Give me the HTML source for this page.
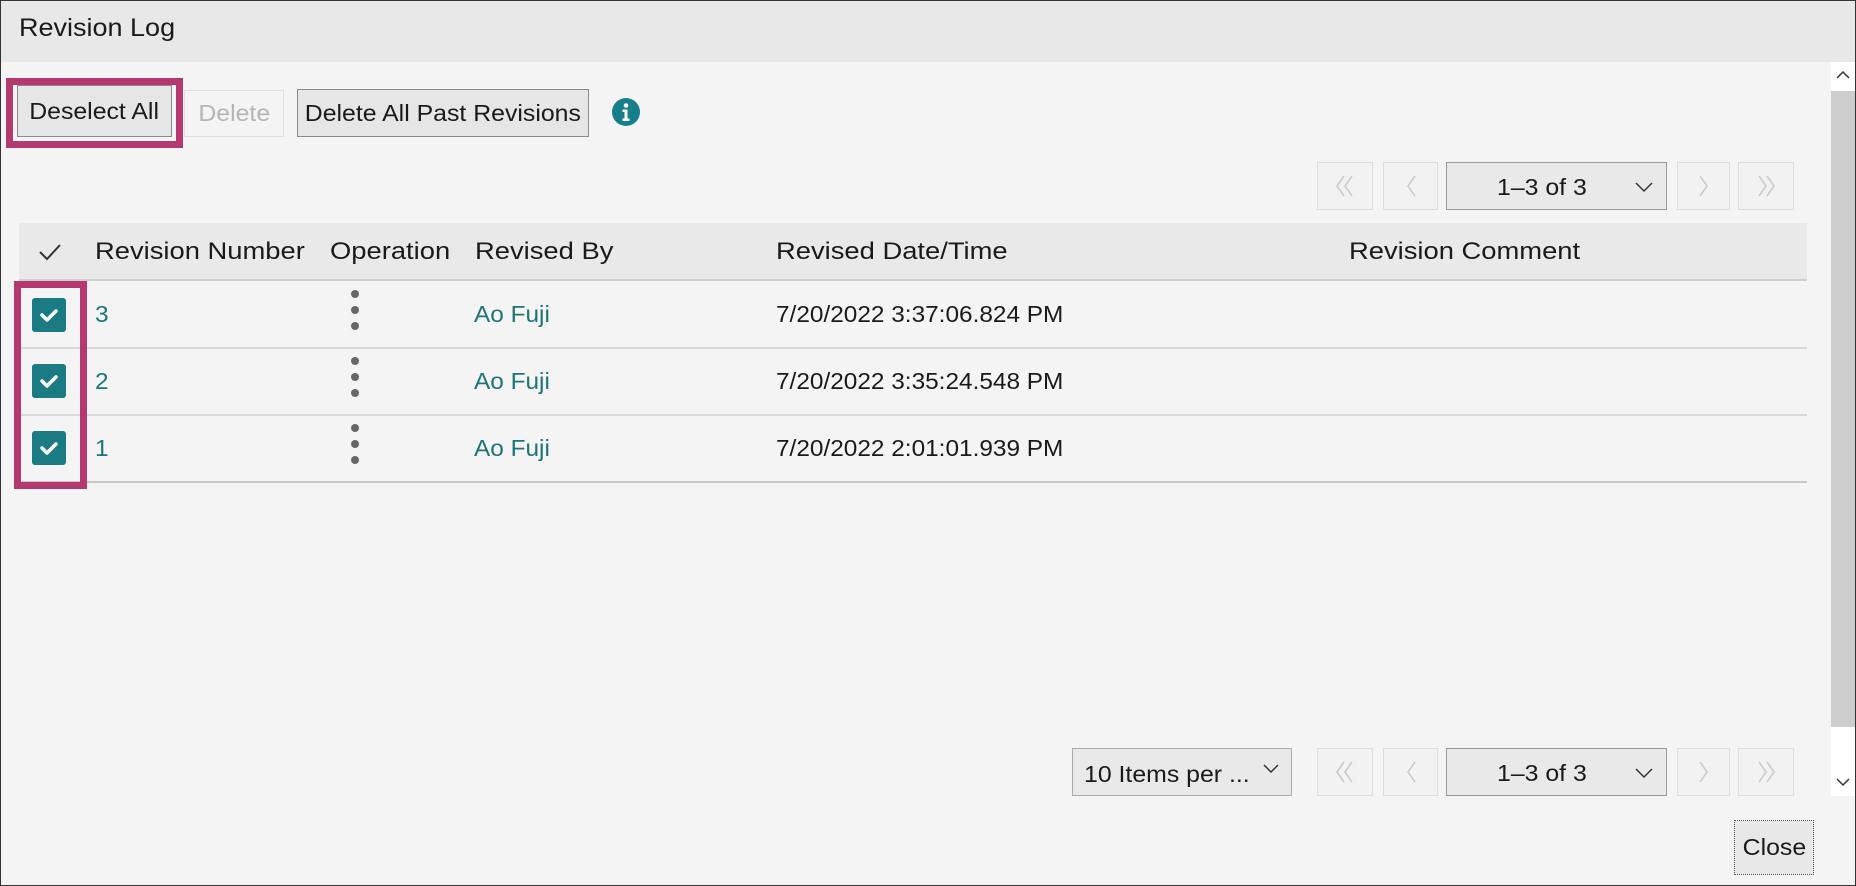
<!DOCTYPE html>
<html><head><meta charset="utf-8"><style>
*{box-sizing:border-box;margin:0;padding:0}
body{width:1856px;height:886px;background:#f4f4f4;font-family:"Liberation Sans",Arial,sans-serif;color:#1a1a1a;position:relative;overflow:hidden}
.abs{position:absolute}
.s{display:inline-block;transform:scaleX(1.08);transform-origin:left center;white-space:nowrap}
.c{transform-origin:center}
.frame{left:0;top:0;width:1856px;height:886px;border:1px solid #333}
.title{left:1px;top:1px;width:1854px;height:61px;background:#e8e8e8;font-size:25px;padding:13px 0 0 18px}
.btn{border:1px solid #8a8a8a;background:#e6e6e6;font-size:23px;display:flex;align-items:center;justify-content:center}
.pg{border:1px solid #ddd;background:#f2f2f2;display:flex;align-items:center;justify-content:center}
.dd{border:1px solid #999;background:#e9e9e9;font-size:23px}
.th{font-size:24px;top:238px}
.th .s{transform:scaleX(1.14)}
.row{left:19px;width:1788px;height:2px;background:#d8d8d8}
.cell{font-size:23px}
.cell .s{transform:scaleX(1.06)}
.link{color:#1d7575}
.cb{left:32px;width:34px;height:34px;background:#1a7b82;border-radius:3px}
.dot{width:8px;height:8px;border-radius:50%;background:#666;left:351px}
</style></head><body>
<div class="abs title"><span class="s">Revision Log</span></div>

<div class="abs" style="left:6px;top:78px;width:177px;height:70px;border:7px solid #b23a6e"></div>
<div class="abs btn" style="left:17px;top:85px;width:155px;height:52px"><span class="s c">Deselect All</span></div>
<div class="abs btn" style="left:184px;top:90px;width:100px;height:47px;border-color:#e0e0e0;background:#f4f4f4;color:#b5b5b5"><span class="s c">Delete</span></div>
<div class="abs btn" style="left:297px;top:89px;width:292px;height:48px"><span class="s c">Delete All Past Revisions</span></div>
<svg class="abs" style="left:612px;top:98px" width="28" height="28" viewBox="0 0 28 28"><circle cx="14" cy="14" r="14" fill="#16808a"/><circle cx="14" cy="7.5" r="2.3" fill="#fff"/><path d="M10.5 11.5h5v9h2v2.5h-7v-2.5h2v-6.5h-2z" fill="#fff"/></svg>

<!-- top pager -->
<div class="abs pg" style="left:1317px;top:162px;width:56px;height:48px"><svg width="24" height="24"><path d="M11 2L4 12l7 10M19 2l-7 10 7 10" fill="none" stroke="#c8c8c8" stroke-width="1.5"/></svg></div>
<div class="abs pg" style="left:1383px;top:162px;width:55px;height:48px"><svg width="14" height="24"><path d="M11 2L4 12l7 10" fill="none" stroke="#c8c8c8" stroke-width="1.5"/></svg></div>
<div class="abs dd" style="left:1446px;top:162px;width:221px;height:48px"><span class="abs s" style="left:50px;top:11px">1–3 of 3</span><svg class="abs" style="left:188px;top:18px" width="18" height="12"><path d="M1 2l8 8 8-8" fill="none" stroke="#333" stroke-width="1.5"/></svg></div>
<div class="abs pg" style="left:1677px;top:162px;width:53px;height:48px"><svg width="14" height="24"><path d="M3 2l7 10-7 10" fill="none" stroke="#c8c8c8" stroke-width="1.5"/></svg></div>
<div class="abs pg" style="left:1738px;top:162px;width:56px;height:48px"><svg width="24" height="24"><path d="M5 2l7 10-7 10M13 2l7 10-7 10" fill="none" stroke="#c8c8c8" stroke-width="1.5"/></svg></div>

<!-- table -->
<div class="abs" style="left:19px;top:223px;width:1788px;height:56px;background:#e9e9e9"></div>
<div class="abs row" style="top:279px;height:2px;background:#cfcfcf"></div>
<svg class="abs" style="left:38px;top:243px" width="24" height="18"><path d="M2 9l7 7L22 2" fill="none" stroke="#333" stroke-width="2"/></svg>
<div class="abs th" style="left:95px"><span class="s">Revision Number</span></div>
<div class="abs th" style="left:330px"><span class="s">Operation</span></div>
<div class="abs th" style="left:475px"><span class="s">Revised By</span></div>
<div class="abs th" style="left:776px"><span class="s">Revised Date/Time</span></div>
<div class="abs th" style="left:1349px"><span class="s">Revision Comment</span></div>

<div class="abs row" style="top:347px"></div>
<div class="abs row" style="top:414px"></div>
<div class="abs row" style="top:481px;background:#c8c8c8"></div>

<div class="abs" style="left:14px;top:281px;width:73px;height:208px;border:7px solid #b23a6e"></div>

<div class="abs cb" style="top:298px"></div>
<div class="abs cb" style="top:364px"></div>
<div class="abs cb" style="top:431px"></div>
<svg class="abs" style="left:32px;top:298px" width="34" height="170"><g fill="none" stroke="#fff" stroke-width="3.5" stroke-linecap="round" stroke-linejoin="round"><path d="M10 17l5 5 9-9"/><path d="M10 83l5 5 9-9"/><path d="M10 150l5 5 9-9"/></g></svg>

<div class="abs cell link" style="left:95px;top:301px"><span class="s">3</span></div>
<div class="abs cell link" style="left:95px;top:368px"><span class="s">2</span></div>
<div class="abs cell link" style="left:95px;top:435px"><span class="s">1</span></div>
<div class="abs dot" style="top:290px"></div><div class="abs dot" style="top:306px"></div><div class="abs dot" style="top:322px"></div>
<div class="abs dot" style="top:357px"></div><div class="abs dot" style="top:373px"></div><div class="abs dot" style="top:389px"></div>
<div class="abs dot" style="top:424px"></div><div class="abs dot" style="top:440px"></div><div class="abs dot" style="top:456px"></div>
<div class="abs cell link" style="left:474px;top:301px"><span class="s">Ao Fuji</span></div>
<div class="abs cell link" style="left:474px;top:368px"><span class="s">Ao Fuji</span></div>
<div class="abs cell link" style="left:474px;top:435px"><span class="s">Ao Fuji</span></div>
<div class="abs cell" style="left:776px;top:301px"><span class="s">7/20/2022 3:37:06.824 PM</span></div>
<div class="abs cell" style="left:776px;top:368px"><span class="s">7/20/2022 3:35:24.548 PM</span></div>
<div class="abs cell" style="left:776px;top:435px"><span class="s">7/20/2022 2:01:01.939 PM</span></div>

<!-- scrollbar -->
<div class="abs" style="left:1831px;top:62px;width:24px;height:734px;background:#fff"></div>
<div class="abs" style="left:1831px;top:91px;width:24px;height:636px;background:#cdcdcd"></div>
<svg class="abs" style="left:1836px;top:70px" width="14" height="9"><path d="M1 8l6-6 6 6" fill="none" stroke="#333" stroke-width="1.5"/></svg>
<svg class="abs" style="left:1836px;top:778px" width="14" height="9"><path d="M1 1l6 6 6-6" fill="none" stroke="#333" stroke-width="1.5"/></svg>

<!-- bottom -->
<div class="abs dd" style="left:1072px;top:748px;width:220px;height:48px;border-color:#aaa"><span class="abs s" style="left:11px;top:12px">10 Items per ...</span><svg class="abs" style="left:190px;top:15px" width="16" height="10"><path d="M1 1l7 7 7-7" fill="none" stroke="#333" stroke-width="1.5"/></svg></div>
<div class="abs pg" style="left:1317px;top:748px;width:56px;height:48px"><svg width="24" height="24"><path d="M11 2L4 12l7 10M19 2l-7 10 7 10" fill="none" stroke="#c8c8c8" stroke-width="1.5"/></svg></div>
<div class="abs pg" style="left:1383px;top:748px;width:55px;height:48px"><svg width="14" height="24"><path d="M11 2L4 12l7 10" fill="none" stroke="#c8c8c8" stroke-width="1.5"/></svg></div>
<div class="abs dd" style="left:1446px;top:748px;width:221px;height:48px"><span class="abs s" style="left:50px;top:11px">1–3 of 3</span><svg class="abs" style="left:188px;top:18px" width="18" height="12"><path d="M1 2l8 8 8-8" fill="none" stroke="#333" stroke-width="1.5"/></svg></div>
<div class="abs pg" style="left:1677px;top:748px;width:53px;height:48px"><svg width="14" height="24"><path d="M3 2l7 10-7 10" fill="none" stroke="#c8c8c8" stroke-width="1.5"/></svg></div>
<div class="abs pg" style="left:1738px;top:748px;width:56px;height:48px"><svg width="24" height="24"><path d="M5 2l7 10-7 10M13 2l7 10-7 10" fill="none" stroke="#c8c8c8" stroke-width="1.5"/></svg></div>

<div class="abs btn" style="left:1734px;top:820px;width:80px;height:55px;border:1px dotted #555;background:#e8e8e8"><span class="s c">Close</span></div>
<div class="abs frame"></div>
</body></html>
